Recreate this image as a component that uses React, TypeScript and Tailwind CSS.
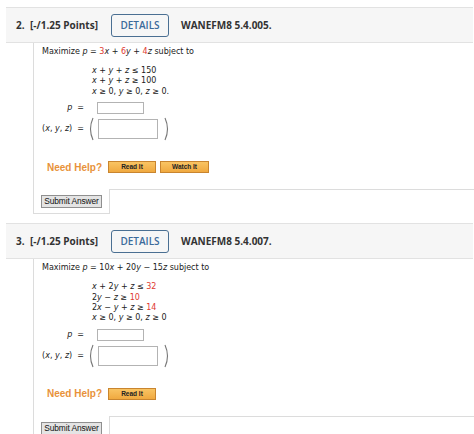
import React from "react";

function V({ children }: { children: React.ReactNode }) {
  return <i>{children}</i>;
}
function R({ children }: { children: React.ReactNode }) {
  return <span className="text-[#e0392f]">{children}</span>;
}

function Header({ num, code }: { num: string; code: string }) {
  return (
    <div className="ml-[6px] mr-[1px] h-[36px] border-y border-[#e2e2e2] bg-[#f6f6f6] flex items-center font-['Open_Sans',sans-serif] text-[10px] font-bold text-[#333]">
      <span className="ml-[10px] w-[14px]">{num}.</span>
      <span>[-/1.25 Points]</span>
      <span className="ml-[13px] h-[23px] w-[58px] border border-[#4a6f92] rounded-[3px] flex items-center justify-center text-[#3b6a9a] font-semibold">
        DETAILS
      </span>
      <span className="ml-[12px]">{code}</span>
    </div>
  );
}

function HelpBtn({ label, w }: { label: string; w: string }) {
  return (
    <span
      className={`${w} h-[12px] flex items-center justify-center border border-[#c9852f] bg-gradient-to-b from-[#f9c463] to-[#f0a93f] font-['Liberation_Sans',Arial,sans-serif] text-[6.5px] font-bold text-[#222]`}
    >
      {label}
    </span>
  );
}

function Paren({ right }: { right?: boolean }) {
  return (
    <svg width="8" height="24" viewBox="0 0 8 24" className="shrink-0">
      <path
        d={right ? "M2 1 Q7 12 2 23" : "M6 1 Q1 12 6 23"}
        fill="none"
        stroke="#777"
        strokeWidth="1.1"
      />
    </svg>
  );
}

function Question({
  num,
  code,
  statement,
  constraints,
  watch,
}: {
  num: string;
  code: string;
  statement: React.ReactNode;
  constraints: React.ReactNode[];
  watch: boolean;
}) {
  return (
    <div>
      <Header num={num} code={code} />
      <div className="ml-[33px] border-l border-[#dcdcdc] font-['DejaVu_Sans',Verdana,sans-serif] text-[8px] text-[#222]">
        <div className="pl-[8px] pt-[4px]">
          <div className="leading-[10px] whitespace-nowrap">{statement}</div>
          <div className="mt-[9px] ml-[50px] leading-[10.4px] whitespace-nowrap">
            {constraints.map((c, i) => (
              <div key={i}>{c}</div>
            ))}
          </div>
          <div className="mt-[5px] flex items-center h-[12px]">
            <span className="w-[42px] text-right whitespace-nowrap">
              <V>p</V>&nbsp;&nbsp;=
            </span>
            <span className="ml-[13px] w-[47px] h-[12px] border border-[#b3b3b3] bg-white" />
          </div>
          <div className="mt-[5px] flex items-center h-[20px]">
            <span className="w-[42px] text-right whitespace-nowrap">
              (<V>x</V>, <V>y</V>, <V>z</V>)&nbsp;&nbsp;=
            </span>
            <span className="ml-[3px] flex items-center">
              <Paren />
            </span>
            <span className="ml-[3px] w-[60px] h-[20px] border border-[#b3b3b3] bg-white" />
            <span className="ml-[5px] flex items-center">
              <Paren right />
            </span>
          </div>
          <div className="mt-[22px] flex items-center h-[12px]">
            <span className="ml-[5px] font-['Liberation_Sans',Arial,sans-serif] text-[10px] font-bold text-[#e8923a] whitespace-nowrap">
              Need Help?
            </span>
            <span className="ml-[6px] flex gap-[4px]">
              <HelpBtn label="Read It" w="w-[48px]" />
              {watch && <HelpBtn label="Watch It" w="w-[49px]" />}
            </span>
          </div>
        </div>
        <div className="h-[16px]" />
        <div className="flex">
          <div className="w-[76px] h-[25px] border-b border-r border-[#dcdcdc] pl-[7px] pt-[6px]">
            <span className="flex items-center justify-center w-[61px] h-[13px] border border-[#8f8f8f] bg-[#e4e4e4] font-['Liberation_Sans',Arial,sans-serif] text-[8.4px] tracking-[-0.1px] text-[#111] whitespace-nowrap overflow-hidden">
              Submit Answer
            </span>
          </div>
          <div className="flex-1 border-t border-[#dcdcdc]" />
        </div>
      </div>
    </div>
  );
}

export default function App() {
  return (
    <div className="w-[474px] h-[434px] overflow-hidden bg-white pt-[7px]">
      <Question
        num="2"
        code="WANEFM8 5.4.005."
        watch={true}
        statement={
          <>
            Maximize <V>p</V> = <R>3</R>
            <V>x</V> + <R>6</R>
            <V>y</V> + <R>4</R>
            <V>z</V> subject to
          </>
        }
        constraints={[
          <>
            <V>x</V> + <V>y</V> + <V>z</V> ≤ 150
          </>,
          <>
            <V>x</V> + <V>y</V> + <V>z</V> ≥ 100
          </>,
          <>
            <V>x</V> ≥ 0, <V>y</V> ≥ 0, <V>z</V> ≥ 0.
          </>,
        ]}
      />
      <div className="h-[9px]" />
      <Question
        num="3"
        code="WANEFM8 5.4.007."
        watch={false}
        statement={
          <>
            Maximize <V>p</V> = 10<V>x</V> + 20<V>y</V> − 15<V>z</V> subject to
          </>
        }
        constraints={[
          <>
            <V>x</V> + 2<V>y</V> + <V>z</V> ≤ <R>32</R>
          </>,
          <>
            2<V>y</V> − <V>z</V> ≥ <R>10</R>
          </>,
          <>
            2<V>x</V> − <V>y</V> + <V>z</V> ≥ <R>14</R>
          </>,
          <>
            <V>x</V> ≥ 0, <V>y</V> ≥ 0, <V>z</V> ≥ 0
          </>,
        ]}
      />
    </div>
  );
}
